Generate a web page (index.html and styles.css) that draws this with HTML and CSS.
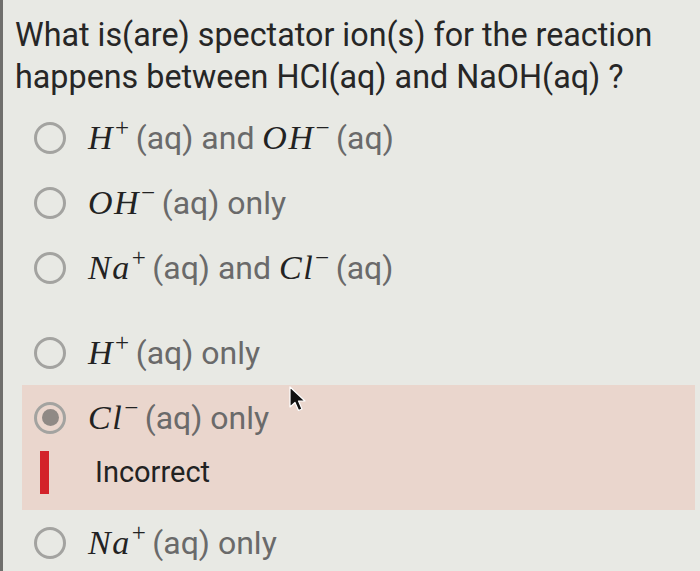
FILE: index.html
```html
<!DOCTYPE html>
<html lang="en">
<head>
  <meta charset="UTF-8" />
  <meta name="viewport" content="width=device-width, initial-scale=1.0" />
  <title>Quiz - Spectator Ions</title>
  <link rel="stylesheet" href="styles.css">
</head>
<body>
  <div class="page">
    <p class="question">What is(are) spectator ion(s) for the reaction<br>happens between HCl(aq) and NaOH(aq) ?</p>

    <div class="options">
      <label class="option">
        <span class="radio"></span>
        <span class="answer"><span class="math">H<sup>+</sup></span>(aq) and <span class="math">OH<sup>−</sup></span>(aq)</span>
      </label>
      <label class="option">
        <span class="radio"></span>
        <span class="answer"><span class="math">OH<sup>−</sup></span>(aq) only</span>
      </label>
      <label class="option">
        <span class="radio"></span>
        <span class="answer"><span class="math">Na<sup>+</sup></span>(aq) and <span class="math">Cl<sup>−</sup></span>(aq)</span>
      </label>
      <label class="option spaced">
        <span class="radio"></span>
        <span class="answer"><span class="math">H<sup>+</sup></span>(aq) only</span>
      </label>

      <div class="result wrong">
        <label class="option">
          <span class="radio checked"></span>
          <span class="answer"><span class="math">Cl<sup>−</sup></span>(aq) only</span>
        </label>
        <div class="feedback">
          <span class="bar"></span>
          <span>Incorrect</span>
        </div>
      </div>

      <label class="option">
        <span class="radio"></span>
        <span class="answer"><span class="math">Na<sup>+</sup></span>(aq) only</span>
      </label>
    </div>

    <svg class="cursor" width="18" height="28" viewBox="0 0 18 28">
      <path d="M1 1 L1 21 L6 16.5 L9.5 24.5 L13 23 L9.5 15 L16 15 Z" fill="#111" stroke="#fff" stroke-width="1.2" stroke-linejoin="round"/>
    </svg>
  </div>
</body>
</html>
```

FILE: styles.css
```css
* {
  margin: 0;
  padding: 0;
  box-sizing: border-box;
}
body {
  background: #e8e9e4;
  font-family: Roboto, "Liberation Sans", sans-serif;
}
.page {
  position: relative;
  min-height: 571px;
  border-left: 3px solid #6f6f6c;
}
.question {
  padding: 14px 0 0 12px;
  font-size: 32.3px;
  line-height: 42px;
  color: #262626;
}
.options {
  margin-top: 7px;
}
.option {
  display: flex;
  align-items: center;
  height: 65px;
  padding-left: 31px;
  cursor: pointer;
}
.option.spaced {
  margin-top: 20px;
}
.radio {
  width: 32px;
  height: 32px;
  border: 3px solid #a3a3a0;
  border-radius: 50%;
  flex-shrink: 0;
  display: flex;
  align-items: center;
  justify-content: center;
}
.radio.checked::after {
  content: "";
  width: 17px;
  height: 17px;
  border-radius: 50%;
  background: #8f8985;
}
.answer {
  margin-left: 22px;
  font-size: 32px;
  color: #6a6a6a;
  white-space: nowrap;
}
.math {
  font-family: "Liberation Serif", serif;
  font-style: italic;
  font-size: 34px;
  color: #222;
  margin-right: 5px;
  letter-spacing: 1.5px;
}
.math sup {
  font-style: normal;
  font-size: 25px;
  line-height: 0;
  vertical-align: 13px;
  margin-left: 1px;
}
.result {
  margin-left: 19px;
  margin-right: 5px;
  background: #ead6cd;
}
.result .option {
  padding-left: 12px;
}
.wrong {
  padding-bottom: 16px;
}
.feedback {
  display: flex;
  align-items: center;
  height: 44px;
  padding-left: 18px;
  font-size: 29px;
  color: #222;
}
.bar {
  width: 9px;
  height: 43px;
  background: #d3232a;
  margin-right: 46px;
}
.cursor {
  position: absolute;
  left: 286px;
  top: 386px;
}
```
